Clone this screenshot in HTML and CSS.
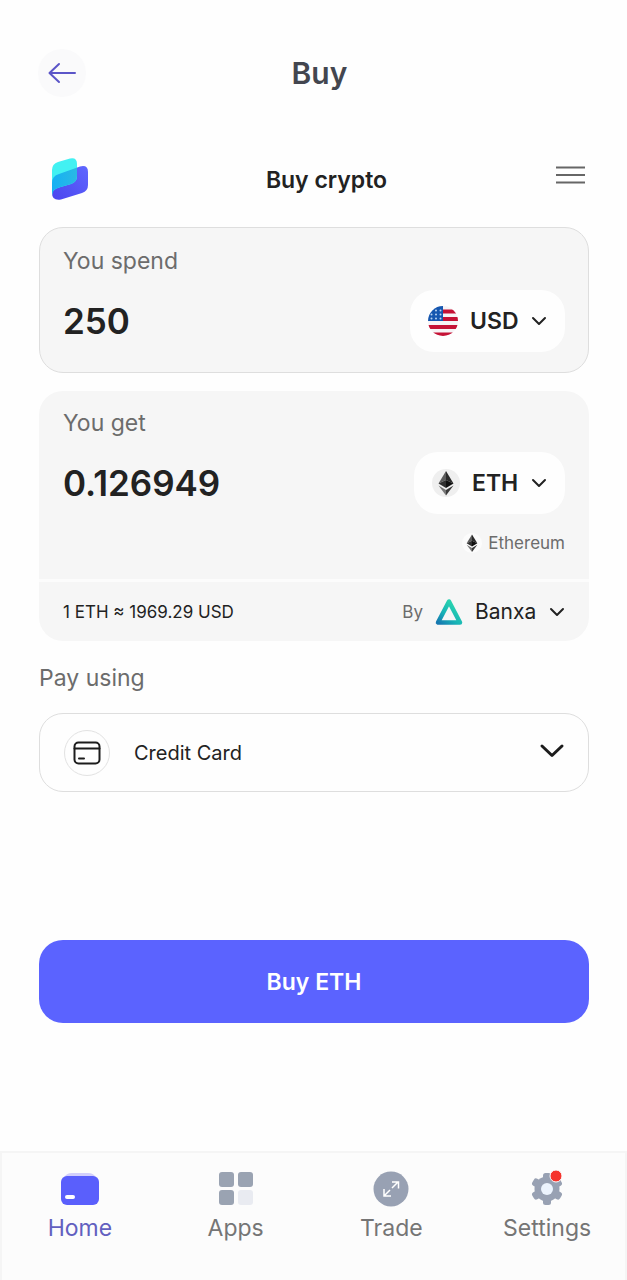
FILE: index.html
```html
<!DOCTYPE html>
<html lang="en">
<head>
<meta charset="utf-8">
<meta name="viewport" content="width=device-width, initial-scale=1">
<title>Buy crypto</title>
<link rel="stylesheet" href="styles.css">
</head>
<body>
<div class="screen">
  <header class="topbar">
    <button class="back" type="button" aria-label="Back">
      <svg width="28" height="22" viewBox="0 0 28 22"><path d="M27 11H2M11 2L1.500 11l9.500 9" /></svg>
    </button>
    <h1 class="title">Buy</h1>
  </header>

  <div class="brandbar">
    <svg class="logo" viewBox="0 0 38 43" role="img" aria-label="Wallet logo">
      <defs>
        <linearGradient id="back-sheet" x1="0" y1="1" x2="1" y2="0"><stop offset="0" stop-color="#4b45ee"/><stop offset="1" stop-color="#5f67ff"/></linearGradient>
        <linearGradient id="overlap" x1="0" y1="0" x2="1" y2="0"><stop offset="0" stop-color="#16b0f4"/><stop offset="1" stop-color="#2ab9e4"/></linearGradient>
        <clipPath id="sheet"><path d="M1 26Q1 19 8 17L29 9.500Q37 7.500 37 15v13Q37 34 31 36L10 42.500Q1 44 1 36z"/></clipPath>
      </defs>
      <path fill="url(#back-sheet)" d="M1 26Q1 19 8 17L29 9.500Q37 7.500 37 15v13Q37 34 31 36L10 42.500Q1 44 1 36z"/>
      <path fill="#42f1f2" d="M1 13Q1 7 7 5L19 1.500Q26 0 26 7v12Q26 25 20 27L8 30.500Q1 32.500 1 38z"/>
      <path clip-path="url(#sheet)" fill="url(#overlap)" d="M1 13Q1 7 7 5L19 1.500Q26 0 26 7v12Q26 25 20 27L8 30.500Q1 32.500 1 38z"/>
    </svg>
    <h2 class="subtitle">Buy crypto</h2>
    <button class="menu" type="button" aria-label="Menu">
      <svg width="29" height="18" viewBox="0 0 29 18"><path d="M0 1.500h29M0 9h29M0 16.500h29"/></svg>
    </button>
  </div>

  <main class="content">
    <section class="card card-spend">
      <label class="label" for="spend">You spend</label>
      <div class="row">
        <input class="amount" id="spend" type="text" inputmode="decimal" value="250">
        <label class="pill">
          <svg class="flag" viewBox="0 0 30 30" aria-hidden="true">
            <defs><clipPath id="round"><circle cx="15" cy="15" r="15"/></clipPath></defs>
            <g clip-path="url(#round)">
              <path fill="#f6f4f6" d="M0 0h30v30H0z"/>
              <path fill="#c51236" d="M14 3.500h16v4H14zM14 11h16v4H14zM0 19h30v4H0zM0 26.500h30V30H0z"/>
              <path fill="#1557b0" d="M0 0h15v15H0z"/>
              <g fill="#b9d3f2"><circle cx="8" cy="4.500" r="1"/><circle cx="12.500" cy="4.500" r="1"/><circle cx="3.500" cy="8.500" r="1"/><circle cx="8" cy="8.500" r="1"/><circle cx="12.500" cy="8.500" r="1"/><circle cx="3.500" cy="12.500" r="1"/><circle cx="8" cy="12.500" r="1"/><circle cx="12.500" cy="12.500" r="1"/></g>
            </g>
          </svg>
          <select class="picker" aria-label="Currency to spend"><option>USD</option></select>
          <svg class="chev" viewBox="0 0 16 10" aria-hidden="true"><path d="M2 2l6 6 6-6"/></svg>
        </label>
      </div>
    </section>

    <section class="card card-get">
      <div class="get-main">
        <label class="label" for="get">You get</label>
        <div class="row">
          <input class="amount" id="get" type="text" inputmode="decimal" value="0.126949">
          <label class="pill">
            <svg class="coin" viewBox="0 0 28 28" aria-hidden="true">
              <defs>
                <g id="eth">
                  <path fill="#5c5c5c" d="M14 2L6.500 14.500 14 11z"/><path fill="#2a2a2a" d="M14 2l7.500 12.500L14 11z"/>
                  <path fill="#303030" d="M6.500 14.500L14 11v8z"/><path fill="#101010" d="M21.500 14.500L14 11v8z"/>
                  <path fill="#777" d="M6.500 16.500L14 21v5.500z"/><path fill="#3a3a3a" d="M21.500 16.500L14 21v5.500z"/>
                </g>
              </defs>
              <circle cx="14" cy="14" r="14" fill="#efefef"/><use href="#eth"/>
            </svg>
            <select class="picker" aria-label="Currency to get"><option>ETH</option></select>
            <svg class="chev" viewBox="0 0 16 10" aria-hidden="true"><path d="M2 2l6 6 6-6"/></svg>
          </label>
        </div>
        <p class="network">
          <svg class="coin-small" viewBox="0 0 28 28" aria-hidden="true"><circle cx="14" cy="14" r="14" fill="#fcfcfc"/><use href="#eth"/></svg>
          Ethereum
        </p>
      </div>
      <div class="quote">
        <span class="rate">1 ETH ≈ 1969.29 USD</span>
        <label class="provider">
          <span class="by">By</span>
          <svg class="banxa" viewBox="0 0 28 28" aria-hidden="true">
            <defs><linearGradient id="banxa" x1="0" y1="1" x2=".7" y2=".2"><stop offset="0" stop-color="#1678b0"/><stop offset=".5" stop-color="#17b3b6"/><stop offset="1" stop-color="#27d0b0"/></linearGradient></defs>
            <path fill="none" stroke="url(#banxa)" stroke-width="4.500" stroke-linejoin="round" d="M14 3.500L3 24.500h22z"/>
          </svg>
          <select class="picker picker-light" aria-label="Provider"><option>Banxa</option></select>
          <svg class="chev" viewBox="0 0 16 10" aria-hidden="true"><path d="M2 2l6 6 6-6"/></svg>
        </label>
      </div>
    </section>

    <label class="pay-label" for="method">Pay using</label>
    <div class="method">
      <span class="method-icon">
        <svg width="28" height="24" viewBox="0 0 28 24" aria-hidden="true"><rect x="1.500" y="1.500" width="25" height="21" rx="4"/><path d="M1.500 7.500h25M6 17.500h5"/></svg>
      </span>
      <select class="method-select" id="method"><option>Credit Card</option></select>
      <svg class="chev-large" viewBox="0 0 24 18" aria-hidden="true"><path d="M2 2l10 9.500L22 2"/></svg>
    </div>

    <button class="buy" type="button">Buy ETH</button>
  </main>

  <nav class="tabs">
    <a class="tab tab-active" href="#">
      <svg width="40" height="36" viewBox="0 0 40 36" aria-hidden="true"><path fill="#d2cffc" d="M4 7Q6 2 12 2h16q6 0 8 5z"/><rect x="1" y="5" width="38" height="29" rx="6" fill="#5a5ffc"/><rect x="5" y="24" width="10" height="4" rx="2" fill="#fff"/></svg>
      Home
    </a>
    <a class="tab" href="#">
      <svg width="40" height="36" viewBox="0 0 40 36" aria-hidden="true"><g fill="#9aa3b2"><rect x="3" y="1" width="15" height="15" rx="3"/><rect x="22" y="1" width="15" height="15" rx="3"/><rect x="3" y="19" width="15" height="15" rx="3"/></g><rect x="22" y="19" width="15" height="15" rx="3" fill="#e9ebf1"/></svg>
      Apps
    </a>
    <a class="tab" href="#">
      <svg width="40" height="36" viewBox="0 0 40 36" aria-hidden="true"><circle cx="20" cy="18" r="17.500" fill="#98a1b3"/><path fill="none" stroke="#fff" stroke-width="1.500" d="M21 17l6-6M21 11h6.500v6.500M19 19l-5.500 5.500M13 18v7h7"/></svg>
      Trade
    </a>
    <a class="tab" href="#">
      <svg width="40" height="36" viewBox="0 0 40 36" aria-hidden="true">
        <g fill="#98a1b3"><circle cx="20" cy="18" r="12.500"/><rect x="16" y="2" width="8" height="32" rx="2.500"/><rect x="16" y="2" width="8" height="32" rx="2.500" transform="rotate(60 20 18)"/><rect x="16" y="2" width="8" height="32" rx="2.500" transform="rotate(120 20 18)"/></g>
        <circle cx="20" cy="18" r="6" fill="#ecf3fd"/>
        <circle cx="29" cy="5" r="6" fill="#f5332c" stroke="#fcfcfc" stroke-width="1"/>
      </svg>
      Settings
    </a>
  </nav>
</div>
</body>
</html>
```
FILE: styles.css
```css
* { box-sizing: border-box; }
body {
  margin: 0;
  background: #fefefe;
  color: #222;
  font-family: Inter, "Liberation Sans", sans-serif;
}
h1, h2, p { margin: 0; }
svg { display: block; flex: none; overflow: visible; }
button, input, select { font: inherit; color: inherit; }
.screen { display: flex; flex-direction: column; min-height: 100vh; }

.topbar {
  display: grid;
  grid-template-columns: 48px 1fr 36px;
  align-items: center;
  padding: 49px 38px 0;
}
.back {
  display: grid;
  place-items: center;
  height: 48px;
  padding: 0;
  border: 0;
  border-radius: 50%;
  background: #fafafb;
}
.back path { fill: none; stroke: #5b55c8; stroke-width: 2; stroke-linecap: round; stroke-linejoin: round; }
.title { font-size: 30px; line-height: 36px; font-weight: 600; color: #43464f; text-align: center; }

.brandbar {
  display: grid;
  grid-template-columns: 38px 1fr 29px;
  align-items: center;
  padding: 60px 42px 0 51px;
}
.logo { width: 38px; height: 43px; }
.subtitle { padding: 2px 0 0 8px; font-size: 23px; line-height: 28px; font-weight: 600; text-align: center; }
.menu { padding: 0 0 7px; border: 0; background: none; }
.menu path { stroke: #666; stroke-width: 2; }

.content { display: flex; flex-direction: column; padding: 27px 38px 0 39px; }
.card { border-radius: 24px; background: #f6f6f6; }
.card-spend { border: 1px solid #dedede; padding: 19px 23px 20px; }
.card-get { margin-top: 18px; }
.get-main { padding: 18px 24px 24px; }
.label, .pay-label { font-size: 23px; line-height: 28px; color: #6c6c6c; }
.label { display: block; }
.row { display: flex; align-items: center; justify-content: space-between; margin-top: 15px; }
.amount {
  flex: 1;
  min-width: 0;
  padding: 0;
  border: 0;
  background: none;
  font-size: 35px;
  line-height: 44px;
  font-weight: 600;
}
.pill {
  display: flex;
  align-items: center;
  gap: 12px;
  height: 62px;
  padding: 0 18px;
  border-radius: 24px;
  background: #fefefe;
}
.picker, .method-select { appearance: none; padding: 0; border: 0; background: none; }
.picker { font-size: 23px; line-height: 28px; font-weight: 600; }
.flag { width: 30px; height: 30px; }
.coin { width: 28px; height: 28px; }
.coin-small { width: 20px; height: 20px; }
.chev { width: 16px; height: 10px; }
.chev path { fill: none; stroke: #222; stroke-width: 2; stroke-linecap: round; stroke-linejoin: round; }
.network {
  display: flex;
  align-items: center;
  justify-content: flex-end;
  gap: 6px;
  margin-top: 17px;
  font-size: 17px;
  line-height: 24px;
  color: #6c6c6c;
}
.quote {
  display: flex;
  align-items: center;
  justify-content: space-between;
  height: 62px;
  padding: 0 24px;
  border-top: 3px solid #fcfcfc;
}
.rate, .by { font-size: 17px; line-height: 24px; }
.by { color: #6c6c6c; }
.provider { display: flex; align-items: center; gap: 12px; }
.banxa { width: 28px; height: 28px; }
.picker-light { font-size: 21px; font-weight: 400; }

.pay-label { margin-top: 23px; }
.method {
  display: flex;
  align-items: center;
  gap: 24px;
  height: 79px;
  margin-top: 21px;
  padding: 0 24px;
  border: 1px solid #dedede;
  border-radius: 24px;
}
.method-icon {
  display: grid;
  place-items: center;
  width: 46px;
  height: 46px;
  border: 1px solid #e2e2e2;
  border-radius: 50%;
}
.method-icon svg { fill: none; stroke: #1c1c1c; stroke-width: 2; stroke-linecap: round; }
.method-select { flex: 1; font-size: 20px; line-height: 28px; }
.chev-large { width: 24px; height: 18px; }
.chev-large path { fill: none; stroke: #1c1c1c; stroke-width: 3; stroke-linecap: round; stroke-linejoin: round; }
.buy {
  height: 83px;
  margin-top: 148px;
  border: 0;
  border-radius: 24px;
  background: #5b63ff;
  color: #fff;
  font-size: 23px;
  font-weight: 600;
}

.tabs {
  display: grid;
  grid-template-columns: repeat(4, 1fr);
  height: 129px;
  margin-top: auto;
  padding-top: 18px;
  border: 2px solid #f5f5f5;
  border-bottom: 0;
  background: #fcfcfc;
}
.tab {
  display: flex;
  flex-direction: column;
  align-items: center;
  gap: 7px;
  font-size: 23px;
  line-height: 28px;
  color: #757575;
  text-decoration: none;
}
.tab-active { color: #6260c0; }
```
